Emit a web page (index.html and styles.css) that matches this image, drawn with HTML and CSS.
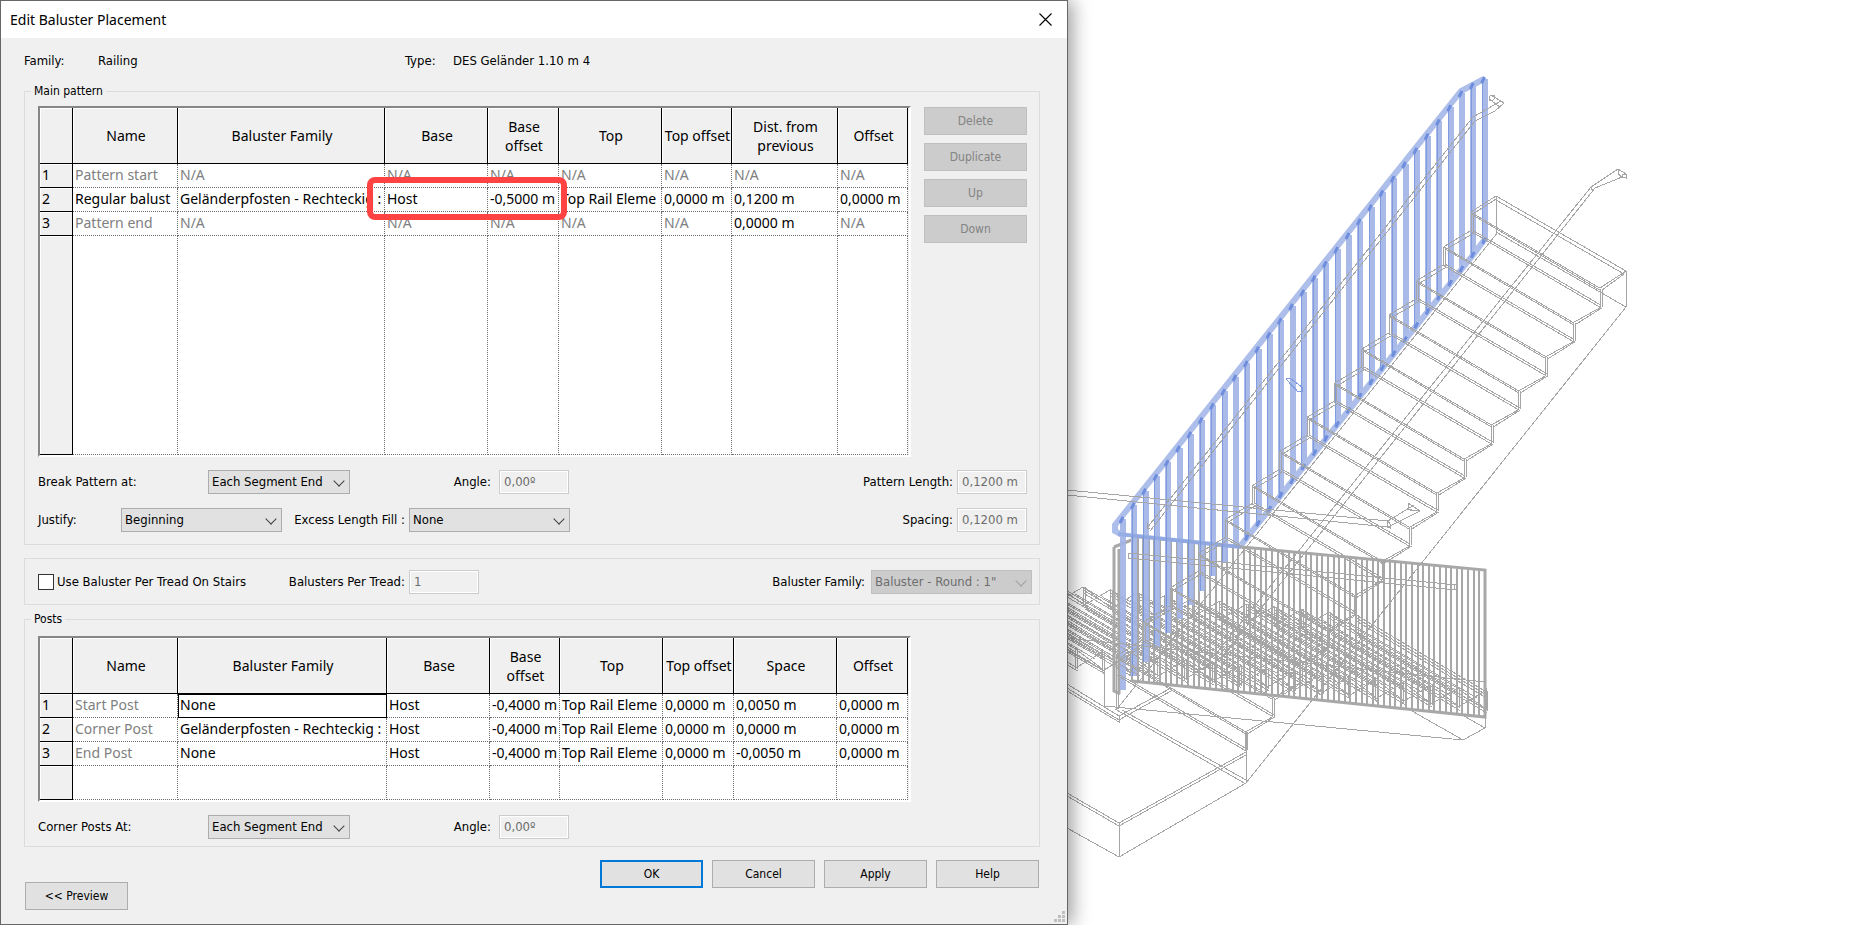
FILE: index.html
```html
<!DOCTYPE html>
<html lang="en">
<head>
<meta charset="utf-8">
<title>Edit Baluster Placement</title>
<link rel="stylesheet" href="styles.css">
</head>
<body>
<div class="screen">
<form class="dialog" onsubmit="return false">
  <header class="titlebar">
    <h1 class="title">Edit Baluster Placement</h1>
    <button type="button" class="close" aria-label="Close"><svg width="13" height="13" viewBox="0 0 13 13"><path d="M.5.5l12 12M12.5.5l-12 12" stroke="#000" stroke-width="1.1" fill="none"/></svg></button>
  </header>

  <div class="content">
    <div class="info">
      <span class="info-family">Family:</span><span class="info-railing">Railing</span>
      <span class="info-type">Type:</span><span>DES Geländer 1.10 m 4</span>
    </div>

    <fieldset class="group group-main">
      <legend>Main pattern</legend>
      <div class="pattern">
        <div class="grid-frame">
          <table class="grid grid-main">
            <colgroup><col class="w33"><col class="w105"><col class="w207"><col class="w103"><col class="w71"><col class="w103"><col class="w70"><col class="w106"><col class="w70"></colgroup>
            <thead><tr><th></th><th>Name</th><th>Baluster Family</th><th>Base</th><th>Base<br>offset</th><th>Top</th><th>Top offset</th><th>Dist. from<br>previous</th><th>Offset</th></tr></thead>
            <tbody>
              <tr><th>1</th><td class="na">Pattern start</td><td class="na">N/A</td><td class="na">N/A</td><td class="na">N/A</td><td class="na">N/A</td><td class="na">N/A</td><td class="na">N/A</td><td class="na">N/A</td></tr>
              <tr><th>2</th><td>Regular balust</td><td>Geländerpfosten - Rechteckig :</td><td>Host</td><td>-0,5000 m</td><td>Top Rail Eleme</td><td>0,0000 m</td><td>0,1200 m</td><td>0,0000 m</td></tr>
              <tr><th>3</th><td class="na">Pattern end</td><td class="na">N/A</td><td class="na">N/A</td><td class="na">N/A</td><td class="na">N/A</td><td class="na">N/A</td><td>0,0000 m</td><td class="na">N/A</td></tr>
              <tr class="filler"><th></th><td></td><td></td><td></td><td></td><td></td><td></td><td></td><td></td></tr>
            </tbody>
          </table>
          <div class="highlight"></div>
        </div>
        <div class="side-buttons">
          <button type="button" class="btn" disabled>Delete</button>
          <button type="button" class="btn" disabled>Duplicate</button>
          <button type="button" class="btn" disabled>Up</button>
          <button type="button" class="btn" disabled>Down</button>
        </div>
      </div>
      <div class="row row-break">
        <label class="lab-wide" for="break">Break Pattern at:</label>
        <span class="select select-mid"><select id="break"><option>Each Segment End</option></select></span>
        <label class="lab-angle" for="angle1">Angle:</label>
        <input class="field" id="angle1" type="text" value="0,00º" disabled>
        <label class="push" for="plen">Pattern Length:</label>
        <input class="field" id="plen" type="text" value="0,1200 m" disabled>
      </div>
      <div class="row">
        <label class="lab-justify" for="justify">Justify:</label>
        <span class="select select-wide"><select id="justify"><option>Beginning</option></select></span>
        <label class="lab-excess" for="excess">Excess Length Fill :</label>
        <span class="select select-wide"><select id="excess"><option>None</option></select></span>
        <label class="push" for="spacing">Spacing:</label>
        <input class="field" id="spacing" type="text" value="0,1200 m" disabled>
      </div>
    </fieldset>

    <div class="group group-tread">
      <input class="check" id="pertread" type="checkbox"><label class="lab-check" for="pertread">Use Baluster Per Tread On Stairs</label>
      <label class="lab-tread" for="treads">Balusters Per Tread:</label>
      <input class="field" id="treads" type="text" value="1" disabled>
      <label class="push push-family" for="bfam">Baluster Family:</label>
      <span class="select select-wide select-off"><select id="bfam" disabled><option>Baluster - Round : 1"</option></select></span>
    </div>

    <fieldset class="group group-posts">
      <legend>Posts</legend>
      <div class="pattern">
        <div class="grid-frame">
          <table class="grid grid-posts">
            <colgroup><col class="w33"><col class="w105"><col class="w209"><col class="w103"><col class="w70"><col class="w103"><col class="w71"><col class="w103"><col class="w71"></colgroup>
            <thead><tr><th></th><th>Name</th><th>Baluster Family</th><th>Base</th><th>Base<br>offset</th><th>Top</th><th>Top offset</th><th>Space</th><th>Offset</th></tr></thead>
            <tbody>
              <tr><th>1</th><td class="na">Start Post</td><td class="active">None</td><td>Host</td><td>-0,4000 m</td><td>Top Rail Eleme</td><td>0,0000 m</td><td>0,0050 m</td><td>0,0000 m</td></tr>
              <tr><th>2</th><td class="na">Corner Post</td><td>Geländerpfosten - Rechteckig :</td><td>Host</td><td>-0,4000 m</td><td>Top Rail Eleme</td><td>0,0000 m</td><td>0,0000 m</td><td>0,0000 m</td></tr>
              <tr><th>3</th><td class="na">End Post</td><td>None</td><td>Host</td><td>-0,4000 m</td><td>Top Rail Eleme</td><td>0,0000 m</td><td>-0,0050 m</td><td>0,0000 m</td></tr>
              <tr class="filler"><th></th><td></td><td></td><td></td><td></td><td></td><td></td><td></td><td></td></tr>
            </tbody>
          </table>
        </div>
        <div class="side-buttons"></div>
      </div>
      <div class="row row-corner">
        <label class="lab-wide" for="corner">Corner Posts At:</label>
        <span class="select select-mid"><select id="corner"><option>Each Segment End</option></select></span>
        <label class="lab-angle" for="angle2">Angle:</label>
        <input class="field" id="angle2" type="text" value="0,00º" disabled>
      </div>
    </fieldset>

    <footer class="actions">
      <button type="button" class="btn btn-preview">&lt;&lt; Preview</button>
      <button type="button" class="btn btn-ok">OK</button>
      <button type="button" class="btn">Cancel</button>
      <button type="button" class="btn">Apply</button>
      <button type="button" class="btn">Help</button>
    </footer>
  </div>
  <svg class="grip" width="11" height="11" viewBox="0 0 11 11" fill="#bfbfbf"><path d="M8 0h3v3h-3zM4 4h3v3h-3zM8 4h3v3h-3zM0 8h3v3h-3zM4 8h3v3h-3zM8 8h3v3h-3z"/></svg>
</form>

<main class="view">
  <svg class="drawing" viewBox="1068 0 793 925" preserveAspectRatio="xMinYMin meet" role="img" aria-label="Stair with railing">
    <path id="back" class="line"/>
    <path id="fence" class="fence"/>
    <path class="fence-rail" d="M1132 536L1242 547L1485 570V717L1132 681M1114 547L1134 539M1114 547V691L1120 694M1119 549V694"/>
    <g class="glass">
      <path id="bars" class="bars"/>
      <path class="rail" d="M1122 535L1115 531V525L1461 91L1484 79"/>
      <path class="rail-low" d="M1118 534L1241 547"/>
      <path class="rail" d="M1241 545L1473 255L1485 239"/>
      <path id="edges" class="edges"/>
      <path id="knots" class="knots"/>
      <path class="edges" d="M1286 379l4-1 12 9v4h-5zM1286 379l11 11"/>
    </g>
    <path id="stairs" class="line"/>
    <path class="line" d="
      M1147 528L1473 117L1501 101L1504 103L1495 111L1475 121L1150 531M1147 523v5h3M1491 95L1504 103M1489 99L1500 107M1491 95l-2 2v3l3 1 3-3-1-3z
      M1215 655L1591 187L1618 169L1626 174V178L1622 177L1595 188L1219 661M1591 187v3l3-1M1618 169v5l4 3M1626 174l-4 1v3
      M1067 490L1388 521L1414 505M1067 495L1388 527L1420 511L1408 503M1388 521l2 3v4l-3-1v-5zM1410 503l-2 2v4l4 1M1420 511l-10-1
      M1128 553L1457 585V590L1128 558zM1454 585v5
      M1498 232L1117 709M1626 307L1246 783M1496 232L1626 307
      M1496 196L1626 271V307M1496 200L1624 274M1496 196V232M1496 196L1471 212M1496 199L1473 214M1626 271L1600 288M1624 274L1602 290
      M1246 732V783L1119 857V823L1246 752M1119 826L1246 755M1119 823L1067 793M1119 826L1067 796M1119 857L1067 828
      M1115 709L1246 784M1122 710L1246 780M1067 684L1119 716L1171 688M1067 688L1119 720L1171 691M1119 716v6l-52-31
      M1104 670V706L1463 740L1485 728V700M1463 740L1412 711M1485 728L1464 716M1067 638L1485 682M1067 615L1140 658M1067 629L1140 672M1067 633L1140 676
      M1104 670L1140 648M1116 656V709M1118 656V709M1067 650L1104 671M1486 688V710"/>
  </svg>
</main>
</div>
<script src="drawing.js"></script>
</body>
</html>
```
FILE: styles.css
```css
* { box-sizing: border-box; }
body { margin: 0; background: #fff; color: #000; font-family: "DejaVu Sans Condensed", "Noto Sans", sans-serif; font-size: 13px; line-height: 16px; }
.screen { display: grid; grid-template-columns: 1068fr 793fr; min-height: 100vh; }
.dialog { position: relative; z-index: 1; display: flex; flex-direction: column; margin: 0; background: #f0f0f0; border: 1px solid #666; box-shadow: 4px 0 18px rgba(0, 0, 0, .4); }
.titlebar { display: flex; align-items: center; justify-content: space-between; height: 37px; padding: 0 15px 0 9px; background: #fff; }
.title { margin: 0; font: 400 14px/20px "Noto Sans", sans-serif; }
.close { display: flex; padding: 0; border: 0; background: none; }
.content { display: flex; flex: 1; flex-direction: column; padding: 15px 27px 12px 23px; }
.info { display: flex; height: 16px; margin-bottom: 14px; }
.info-family { width: 74px; }
.info-railing { width: 307px; }
.info-type { width: 48px; }
.group { min-width: 0; margin: 0; border: 1px solid #dcdcdc; }
.group legend { margin-left: -7px; padding: 0 3px; height: 16px; font-size: 12px; }
.group-main { padding: 7px 12px 12px 13px; }
.pattern { display: flex; gap: 13px; }
.grid-frame { position: relative; flex: 1; border: 2px solid; border-color: #868686 #fff #fff #868686; padding-right: 1px; }
.side-buttons { display: flex; flex: 0 0 103px; flex-direction: column; gap: 8px; padding-top: 1px; }
.btn { width: 103px; height: 28px; padding: 0; border: 1px solid #adadad; background: #e1e1e1; color: #000; font: inherit; font-size: 12px; }
.btn:disabled { border-color: #bfbfbf; background: #ccc; color: #838383; }
.btn-ok { border: 2px solid #0078d7; }

.grid { width: 100%; table-layout: fixed; border-collapse: separate; border-spacing: 0; background: #fff; font: 14px/19px "Noto Sans", sans-serif; }
.w33 { width: 33px; } .w70 { width: 70px; } .w71 { width: 71px; } .w103 { width: 103px; } .w105 { width: 105px; } .w106 { width: 106px; } .w207 { width: 207px; } .w209 { width: 209px; }
.grid th { background: #f0f0f0; border: solid #000; border-width: 0 1px 1px 0; font-weight: 400; padding: 0; white-space: nowrap; overflow: hidden; box-shadow: inset 1px 1px #fff; }
.grid thead th { height: 56px; padding-left: 2px; }
.grid tbody th { height: 24px; padding: 0 0 2px 2px; text-align: left; }
.grid td { height: 24px; padding: 0 0 2px 2px; border: dotted #6e6e6e; border-width: 0 1px 1px 0; white-space: nowrap; overflow: hidden; }
.grid .na { color: #808080; }
.grid .active { outline: 1px solid #000; outline-offset: -1px; }
.grid-main .filler th, .grid-main .filler td { height: 219px; }
.grid-posts .filler th, .grid-posts .filler td { height: 34px; }
.highlight { position: absolute; left: 37.6%; width: 23.1%; top: 69px; height: 43px; border: 6px solid #ff4343; border-radius: 8px; }

.row { display: flex; align-items: center; height: 24px; margin-top: 14px; white-space: nowrap; }
.row-break { margin-top: 13px; }
.row .push, .group-tread .push { margin-left: auto; padding-right: 4px; }
.lab-wide { width: 170px; }
.lab-angle { width: 149px; padding-right: 8px; text-align: right; }
.lab-justify { width: 83px; }
.lab-excess { width: 127px; padding-right: 4px; text-align: right; }
.select { position: relative; display: block; height: 24px; }
.select-mid { width: 142px; }
.select-wide { width: 161px; }
.select select { width: 100%; height: 100%; padding: 0 20px 0 3px; border: 1px solid #adadad; border-radius: 0; background: #e1e1e1; color: #000; font: inherit; appearance: none; }
.select::after { content: ""; position: absolute; right: 7px; top: 7px; width: 7px; height: 7px; border: solid #404040; border-width: 0 1px 1px 0; transform: rotate(45deg); }
.select-off select { border-color: #bfbfbf; background: #ccc; color: #6d6d6d; opacity: 1; }
.select-off::after { border-color: #a0a0a0; }
.field { width: 70px; height: 24px; padding: 0 4px 1px; border: 1px solid #ccc; box-shadow: inset 0 0 0 1px #fff; background: #f0f0f0; color: #6d6d6d; font: inherit; }
.group-tread { display: flex; align-items: center; height: 47px; margin: 13px 0 6px; padding: 0 7px 0 13px; white-space: nowrap; }
.check { width: 16px; height: 16px; margin: 0; border: 1px solid #333; background: #fff; appearance: none; }
.lab-check { width: 193px; padding-left: 3px; }
.lab-tread { width: 162px; padding-right: 4px; text-align: right; }
.group-tread .push-family { padding-right: 6px; }
.group-posts { padding: 9px 12px 7px 13px; }
.row-corner { margin-top: 13px; }
.actions { display: flex; gap: 9px; padding: 13px 1px 0; }
.btn-preview { margin: 22px auto 0 0; }
.grip { position: absolute; right: 2px; bottom: 2px; }

.view { position: relative; overflow: hidden; }
.drawing { display: block; width: 100%; }
.drawing path { fill: none; }
.line { stroke: #a6a6a6; stroke-width: 1; shape-rendering: crispEdges; }
.fence { stroke: #a8a8a8; stroke-width: 2; shape-rendering: crispEdges; }
.fence-rail { stroke: #a8a8a8; stroke-width: 3; }
.glass { opacity: .92; }
.bars { stroke: #a2b5e7; stroke-width: 6; shape-rendering: crispEdges; }
.rail { stroke: #a6b9e8; stroke-width: 6; }
.rail-low { stroke: #8ea7e4; stroke-width: 4; }
.edges { stroke: #7593dd; stroke-width: 1; shape-rendering: crispEdges; }
.knots { stroke: #6284da; stroke-width: 3; }
```
FILE: drawing.js
```js
const set = (id, parts) => document.getElementById(id).setAttribute('d', parts.join(''));
const seg = (x1, y1, x2, y2) => `M${x1.toFixed(1)} ${y1.toFixed(1)}L${x2.toFixed(1)} ${y2.toFixed(1)}`;

// Upper flight: fourteen steps, each with doubled nosing and riser edges.
const stairs = [];
for (let k = 0; k < 14; k++) {
  const lx = 1471 - 27.3 * k, ly = 212.5 + 34.1 * k;
  const rx = lx + 129.5, ry = ly + 76;
  stairs.push(seg(lx, ly, rx, ry), seg(lx + 1, ly + 2, rx, ry + 2), seg(lx, ly + 19, rx, ry + 19), seg(lx + 2, ly + 18, rx + 1, ry + 17));
  stairs.push(seg(lx, ly, lx, ly + 19), seg(lx + 2, ly + 1, lx + 2, ly + 19), seg(rx, ry, rx, ry + 19), seg(rx + 2, ry, rx + 2, ry + 18));
  if (k < 13) {
    stairs.push(seg(lx, ly + 18, lx - 27, ly + 34), seg(lx + 2, ly + 21, lx - 25, ly + 37));
    stairs.push(seg(rx, ry + 19, rx - 27, ry + 34), seg(rx + 2, ry + 19, rx - 25, ry + 36));
  }
}
set('stairs', stairs);

// Lower flight, seen behind the landing railing.
const back = [];
for (let j = -5; j <= 10; j++) {
  const x = 1083 + 27.3 * j, y = 587 + 2.8 * j;
  for (const [dx, dy] of [[0, 0], [0, 3], [0, 6], [0, 18], [2, 22], [-8, 7]]) back.push(seg(x + dx, y + dy, x + dx + 129, y + dy + 76));
  for (const [dx, dy] of [[0, 0], [129, 76]]) {
    back.push(seg(x + dx, y + dy, x + dx, y + dy + 20), seg(x + dx + 2, y + dy, x + dx + 2, y + dy + 20));
    if (j === 10) continue;
    back.push(seg(x + dx, y + dy + 19, x + dx + 27, y + dy + 3), seg(x + dx, y + dy, x + dx + 27, y + dy + 20));
  }
}
set('back', back);

// Landing railing balusters.
const fence = [];
for (let x = 1132; x < 1485; x += 5.6) fence.push(seg(x, 536 + (x - 1132) * .1, x, 681 + (x - 1132) * .102));
set('fence', fence);

// Selected railing balusters.
const bars = [], edges = [], knots = [];
for (let i = 0; i <= 32; i++) {
  const x = 1122 + 11.3 * i;
  const top = i < 31 ? 519 - 14.2 * i : 91 - 6 * (i - 30);
  const bottom = i < 11 ? 690 - 14.2 * i : 545 - 1.25 * (x - 1241);
  bars.push(seg(x + 1, top, x + 1, bottom));
  if (i % 5 !== 0) edges.push(seg(x - 1, top, x - 1, bottom));
  knots.push(seg(x - 2, top + 4, x + 1, top - 2));
  if (i > 10) knots.push(seg(x - 1, bottom + 2, x + 2, bottom - 4));
}
set('bars', bars);
set('edges', edges);
set('knots', knots);
```
